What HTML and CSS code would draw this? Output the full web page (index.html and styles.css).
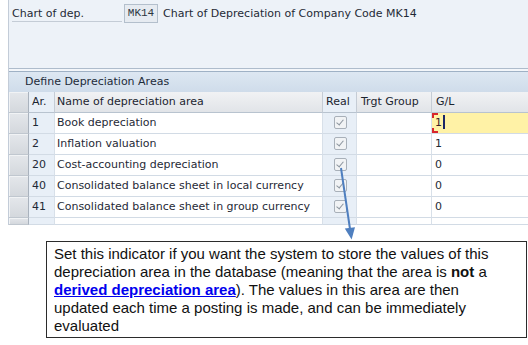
FILE: index.html
```html
<!DOCTYPE html>
<html lang="en">
<head>
    <meta charset="UTF-8">
    <title>Define Depreciation Areas</title>
    <link rel="stylesheet" href="styles.css">
</head>
<body>
    <div class="screen">
        <div class="app">
            <div class="head">
                <span class="label">Chart of dep.</span>
                <span class="field">MK14</span>
                <span class="desc">Chart of Depreciation of Company Code MK14</span>
            </div>
            <div class="sep"></div>

            <div class="panel">
                <div class="title">Define Depreciation Areas</div>

                <div class="row hdr">
                    <div class="sel"></div>
                    <div class="c ar">Ar.</div>
                    <div class="c name">Name of depreciation area</div>
                    <div class="c real">Real</div>
                    <div class="c grp">Trgt Group</div>
                    <div class="c gl">G/L</div>
                </div>

                <div class="row">
                    <div class="sel"></div>
                    <div class="c ar">1</div>
                    <div class="c name">Book depreciation</div>
                    <div class="c real"><span class="chk"></span></div>
                    <div class="c grp"></div>
                    <div class="c gl focus">1<span class="caret"></span></div>
                </div>
                <div class="row">
                    <div class="sel"></div>
                    <div class="c ar">2</div>
                    <div class="c name">Inflation valuation</div>
                    <div class="c real"><span class="chk"></span></div>
                    <div class="c grp"></div>
                    <div class="c gl">1</div>
                </div>
                <div class="row">
                    <div class="sel"></div>
                    <div class="c ar">20</div>
                    <div class="c name">Cost-accounting depreciation</div>
                    <div class="c real"><span class="chk"></span></div>
                    <div class="c grp"></div>
                    <div class="c gl">0</div>
                </div>
                <div class="row">
                    <div class="sel"></div>
                    <div class="c ar">40</div>
                    <div class="c name">Consolidated balance sheet in local currency</div>
                    <div class="c real"><span class="chk"></span></div>
                    <div class="c grp"></div>
                    <div class="c gl">0</div>
                </div>
                <div class="row">
                    <div class="sel"></div>
                    <div class="c ar">41</div>
                    <div class="c name">Consolidated balance sheet in group currency</div>
                    <div class="c real"><span class="chk"></span></div>
                    <div class="c grp"></div>
                    <div class="c gl">0</div>
                </div>
                <div class="row stub">
                    <div class="sel"></div>
                    <div class="c ar"></div>
                    <div class="c name"></div>
                    <div class="c real"></div>
                    <div class="c grp"></div>
                    <div class="c gl"></div>
                </div>
            </div>
        </div>

        <div class="note">
            Set this indicator if you want the system to store the values of this
            depreciation area in the database (meaning that the area is <b>not</b> a
            <a href="#">derived depreciation area</a>). The values in this area are then
            updated each time a posting is made, and can be immediately
            evaluated
        </div>

        <!-- pointer from the Real checkbox to the note -->
        <svg class="arrow" width="528" height="345" viewBox="0 0 528 345">
            <line x1="341" y1="168" x2="350" y2="229" stroke="#4f7fbf" stroke-width="2"/>
            <polygon points="344.8,228.6 355,227.2 351.6,239.5" fill="#4f7fbf"/>
        </svg>
    </div>
</body>
</html>
```

FILE: styles.css
```css
body {
    margin: 0;
    background: #ffffff;
    font-family: "DejaVu Sans", Verdana, sans-serif;
    font-size: 11px;
    color: #1f2a36;
}
.screen {
    position: relative;
    width: 528px;
    height: 345px;
    overflow: hidden;
    background: #ffffff;
}
.app {
    margin-left: 8px;
    border-left: 1px solid #c3ccd8;
    width: 560px;
}
.head {
    height: 68px;
    box-sizing: border-box;
    padding: 4px 0 0 3px;
    background: #edf2f8;
    display: flex;
    align-items: flex-start;
}
.label {
    width: 110px;
    height: 18px;
    line-height: 20px;
    box-sizing: border-box;
    border-bottom: 1px solid #c4ccd6;
}
.field {
    margin-left: 2px;
    width: 34px;
    height: 19px;
    box-sizing: border-box;
    border: 1px solid #b3bfcc;
    background: #e6ebf1;
    font-family: "Liberation Mono", "Courier New", monospace;
    font-size: 11px;
    line-height: 17px;
    text-align: center;
    color: #2c3540;
}
.desc {
    margin-left: 5px;
    line-height: 20px;
}
.sep {
    height: 2px;
    border-top: 1px solid #aebccc;
    background: #f3f6fa;
}
.panel {
    border-top: 1px solid #9fb1c5;
}
.title {
    height: 20px;
    line-height: 20px;
    padding-left: 16px;
    background: linear-gradient(#dde7f2, #cfdcea);
    color: #1d2b3a;
}
.row {
    display: grid;
    grid-template-columns: 20px 26px 268px 34px 75px 1fr;
    height: 21px;
}
.row > div {
    box-sizing: border-box;
    border-right: 1px solid #d8e0e9;
    border-bottom: 1px solid #d2dbe5;
    line-height: 20px;
    white-space: nowrap;
    overflow: hidden;
}
.row .sel {
    background: linear-gradient(#e4e7eb, #d4d8dd);
    border-right: 1px solid #a9b2bd;
    border-bottom: 1px solid #c0c7cf;
    box-shadow: inset 1px 1px 0 #f1f3f5;
}
.c {
    padding-left: 2px;
    background: #ffffff;
}
.c.ar {
    padding-left: 3px;
    background: #e8eff7;
}
.c.real {
    background: #e8eff7;
    text-align: center;
}
.c.grp {
    padding-left: 4px;
}
.c.gl {
    padding-left: 3px;
}
.hdr > div {
    background: linear-gradient(#f1f2f4, #e1e4e8);
    border-right: 1px solid #c5ccd5;
    border-bottom: 1px solid #b8c3cf;
    color: #1c2530;
}
.hdr .c.real {
    text-align: left;
    padding-left: 3px;
}
.hdr .c.gl {
    padding-left: 4px;
}
.chk {
    display: inline-block;
    width: 13px;
    height: 13px;
    margin-top: 3px;
    box-sizing: border-box;
    border: 1px solid #a8b0b9;
    border-radius: 2px;
    background: #f1f3f5;
    position: relative;
    vertical-align: top;
}
.chk::after {
    content: "";
    position: absolute;
    left: 3px;
    top: 1px;
    width: 3px;
    height: 6px;
    border-right: 1.5px solid #8c959f;
    border-bottom: 1.5px solid #8c959f;
    transform: rotate(40deg);
}
.c.gl.focus {
    position: relative;
    background: #fff2a6;
    color: #3a1c2a;
}
.c.gl.focus::before,
.c.gl.focus::after {
    content: "";
    position: absolute;
    left: 0;
    width: 4px;
    height: 3px;
    border-left: 2px solid #d8262b;
}
.c.gl.focus::before {
    top: 0;
    border-top: 2px solid #d8262b;
}
.c.gl.focus::after {
    bottom: 0;
    border-bottom: 2px solid #d8262b;
}
.caret {
    display: inline-block;
    width: 2px;
    height: 14px;
    margin-left: 1px;
    background: #1b2766;
    vertical-align: -3px;
}
.row.stub {
    height: 7px;
}
.note {
    position: absolute;
    left: 46px;
    top: 241px;
    width: 481px;
    height: 97px;
    box-sizing: border-box;
    border: 1px solid #2b2b2b;
    padding: 3px 18px 0 7px;
    background: #ffffff;
    font-family: "Liberation Sans", Arial, sans-serif;
    font-size: 15px;
    line-height: 18px;
    color: #111111;
}
.note a {
    color: #0000ee;
    font-weight: bold;
    text-decoration: underline;
}
.arrow {
    position: absolute;
    left: 0;
    top: 0;
    pointer-events: none;
}
```
